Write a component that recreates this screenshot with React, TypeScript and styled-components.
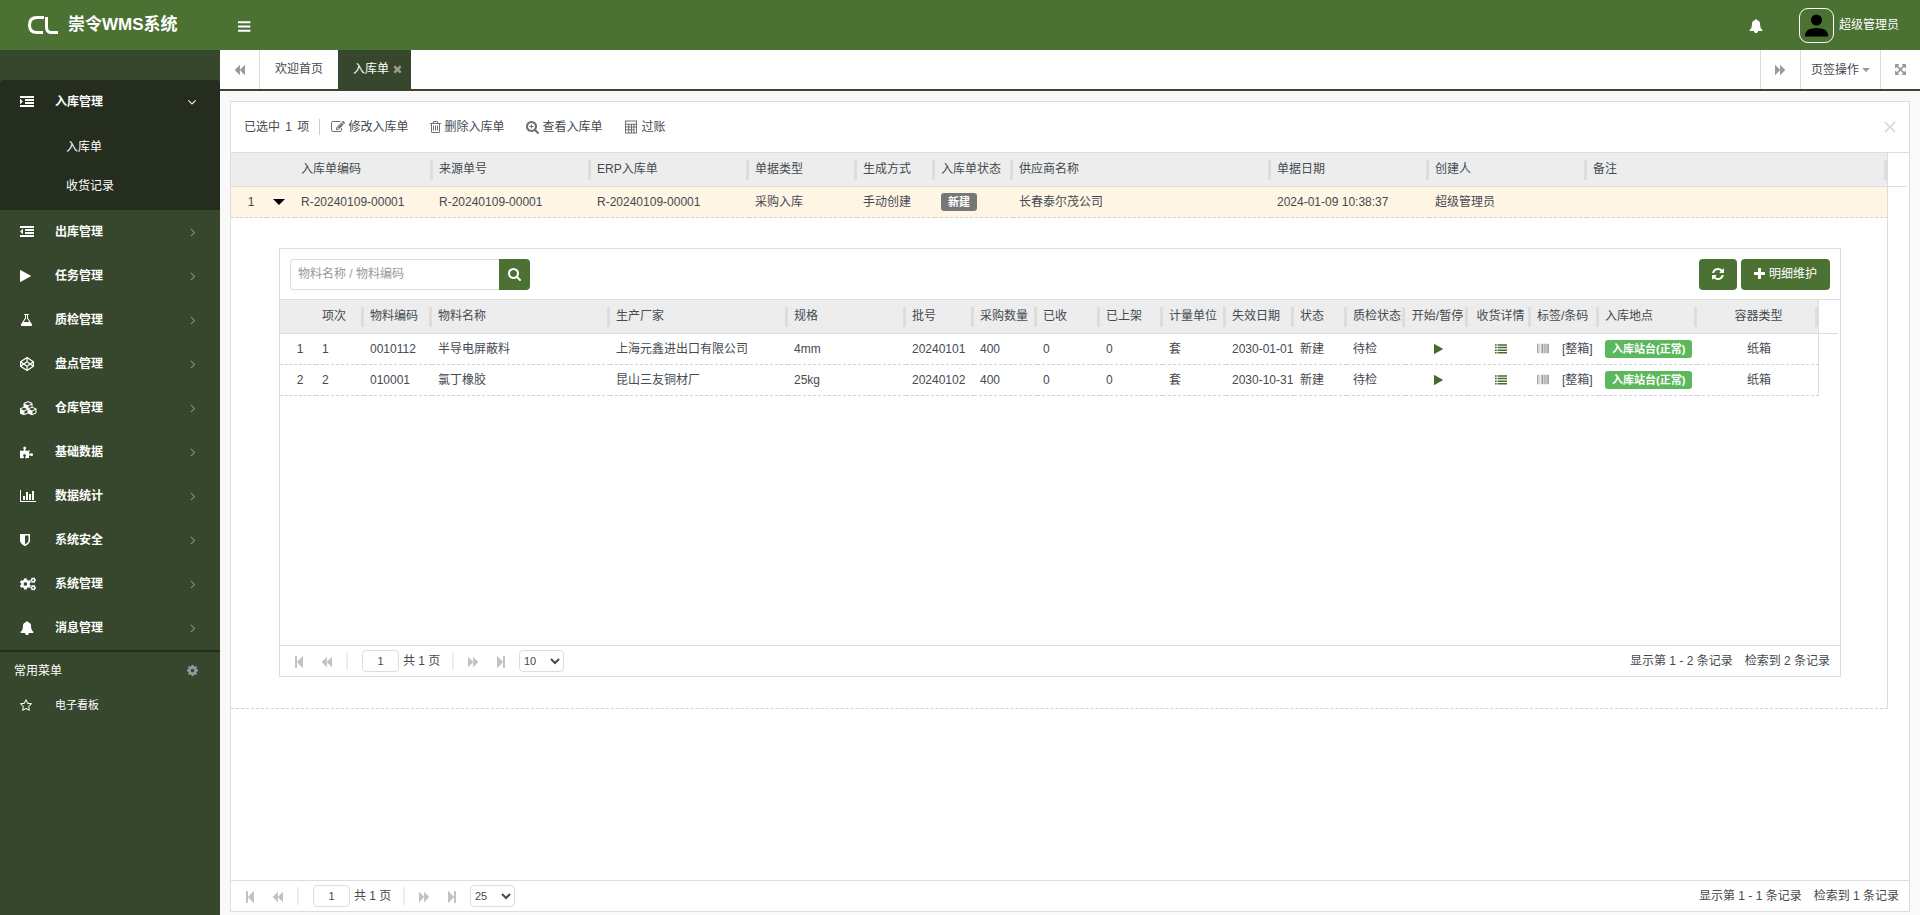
import React from "react";
import styled, { createGlobalStyle } from "styled-components";
import { FaCodepen, FaCogs, FaPuzzlePiece } from "react-icons/fa";

const green = "#4b7133";
const side = "#37472d";
const sideDark = "#242d1e";
const line = "#dddddd";
const text = "#444a50";

const Global = createGlobalStyle`
  * { box-sizing: border-box; }
  body {
    margin: 0;
    background: #f9f9f9;
    color: ${text};
    font: 12px/18px "Liberation Sans", "Noto Sans CJK SC", sans-serif;
  }
  button, input, select { font: inherit; color: inherit; }
  button { border: 0; background: none; padding: 0; cursor: pointer; }
  a { color: inherit; text-decoration: none; }
  ul { list-style: none; margin: 0; padding: 0; }
  svg { display: block; flex: none; }
`;

/* Icon outlines on a 1792-unit em: [left edge, advance width, path] */
const bar = (y: number) =>
  `M0 ${y + 32}q0-32 32-32h1728q32 0 32 32v192q0 32-32 32h-1728q-32 0-32-32z`;
const shortBar = (y: number) =>
  `M640 ${y + 32}q0-32 32-32h1088q32 0 32 32v192q0 32-32 32h-1088q-32 0-32-32z`;
const listLine = (y: number) =>
  `M0 ${y}h256v224h-256zM384 ${y}h1408v224h-1408z`;

const glyphs: Record<string, [number, number, string]> = {
  indent: [0, 1792, "M352 832q0 14-9 23l-288 288q-9 9-23 9-13 0-22.500-9.500t-9.500-22.500v-576q0-13 9.500-22.500t22.500-9.500q14 0 23 9l288 288q9 9 9 23z" + bar(1280) + shortBar(896) + shortBar(512) + bar(128)],
  outdent: [0, 1792, "M384 544v576q0 13-9.500 22.500t-22.500 9.500q-14 0-23-9l-288-288q-9-9-9-23t9-23l288-288q9-9 23-9 13 0 22.500 9.500t9.500 22.500z" + bar(1280) + shortBar(896) + shortBar(512) + bar(128)],
  bars: [192, 1536, "M1664 1344v128q0 26-19 45t-45 19h-1408q-26 0-45-19t-19-45v-128q0-26 19-45t45-19h1408q26 0 45 19t19 45zm0-512v128q0 26-19 45t-45 19h-1408q-26 0-45-19t-19-45v-128q0-26 19-45t45-19h1408q26 0 45 19t19 45zm0-512v128q0 26-19 45t-45 19h-1408q-26 0-45-19t-19-45v-128q0-26 19-45t45-19h1408q26 0 45 19t19 45z"],
  play: [192, 1408, "M1576 927l-1328 738q-23 13-39.500 3t-16.500-36v-1472q0-26 16.500-36t39.500 3l1328 738q23 13 23 31t-23 31z"],
  times: [190, 1408, "M1490 1322q0 40-28 68l-136 136q-28 28-68 28t-68-28l-294-294-294 294q-28 28-68 28t-68-28l-136-136q-28-28-28-68t28-68l294-294-294-294q-28-28-28-68t28-68l136-136q28-28 68-28t68 28l294 294 294-294q28-28 68-28t68 28l136 136q28 28 28 68t-28 68l-294 294 294 294q28 28 28 68z"],
  backward: [64, 1664, "M1683 141q19-19 32-13t13 32v1472q0 26-13 32t-32-13l-710-710q-9-9-13-19v710q0 26-13 32t-32-13l-710-710q-19-19-19-45t19-45l710-710q19-19 32-13t13 32v710q4-10 13-19z"],
  forward: [64, 1664, "M109 1651q-19 19-32 13t-13-32v-1472q0-26 13-32t32 13l710 710q9 9 13 19v-710q0-26 13-32t32 13l710 710q19 19 19 45t-19 45l-710 710q-19 19-32 13t-13-32v-710q-4 10-13 19z"],
  first: [384, 1024, "M1363 141q19-19 32-13t13 32v1472q0 26-13 32t-32-13l-710-710q-9-9-13-19v678q0 64-64 64h-128q-64 0-64-64v-1408q0-64 64-64h128q64 0 64 64v678q4-10 13-19z"],
  last: [384, 1024, "M429 1651q-19 19-32 13t-13-32v-1472q0-26 13-32t32 13l710 710q9 9 13 19v-678q0-64 64-64h128q64 0 64 64v1408q0 64-64 64h-128q-64 0-64-64v-678q-4 10-13 19z"],
  search: [64, 1664, "M1216 832q0-185-131.500-316.500t-316.500-131.500-316.500 131.500-131.500 316.500 131.500 316.500 316.500 131.500 316.500-131.500 131.500-316.500zm512 832q0 52-38 90t-90 38q-54 0-90-38l-343-342q-179 124-399 124-143 0-273.500-55.500t-225-150-150-225-55.500-273.500 55.500-273.500 150-225 225-150 273.500-55.500 273.500 55.500 225 150 150 225 55.500 273.500q0 220-124 399l343 343q37 37 37 90z"],
  refresh: [128, 1536, "M1639 1056q0 5-1 7-64 268-268 434.500t-478 166.500q-146 0-282.500-55t-243.500-157l-129 129q-19 19-45 19t-45-19-19-45v-448q0-26 19-45t45-19h448q26 0 45 19t19 45-19 45l-137 137q71 66 161 102t187 36q134 0 250-65t186-179q11-17 53-117 8-23 30-23h192q13 0 22.500 9.500t9.500 22.500zm25-800v448q0 26-19 45t-45 19h-448q-26 0-45-19t-19-45 19-45l138-138q-148-137-349-137-134 0-250 65t-186 179q-11 17-53 117-8 23-30 23h-199q-13 0-22.500-9.500t-9.500-22.500v-7q65-268 270-434.500t480-166.500q146 0 284 55.500t245 156.500l130-129q19-19 45-19t45 19 19 45z"],
  edit: [0, 1792, "M888 1184l116-116-152-152-116 116v56h96v96h56zm440-720q-16-16-33 1l-350 350q-17 17-1 33t33-1l350-350q17-17 1-33zm80 594v190q0 119-84.500 203.500t-203.500 84.500h-832q-119 0-203.500-84.500t-84.500-203.500v-832q0-119 84.500-203.500t203.500-84.500h832q63 0 117 25 15 7 18 23 3 17-9 29l-49 49q-14 14-32 8-23-6-45-6h-832q-66 0-113 47t-47 113v832q0 66 47 113t113 47h832q66 0 113-47t47-113v-126q0-13 9-22l64-64q15-15 35-7t20 29zm-96-738l288 288-672 672h-288v-288zm444 132l-92 92-288-288 92-92q28-28 68-28t68 28l152 152q28 28 28 68t-28 68z"],
  trash: [192, 1408, "M704 736v576q0 14-9 23t-23 9h-64q-14 0-23-9t-9-23v-576q0-14 9-23t23-9h64q14 0 23 9t9 23zm256 0v576q0 14-9 23t-23 9h-64q-14 0-23-9t-9-23v-576q0-14 9-23t23-9h64q14 0 23 9t9 23zm256 0v576q0 14-9 23t-23 9h-64q-14 0-23-9t-9-23v-576q0-14 9-23t23-9h64q14 0 23 9t9 23zm128 724v-948h-896v948q0 22 7 40.500t14.500 27 10.500 8.500h832q3 0 10.500-8.500t14.500-27 7-40.500zm-672-1076h448l-48-117q-7-9-17-11h-317q-10 2-17 11zm928 32v64q0 14-9 23t-23 9h-96v948q0 83-47 143.500t-113 60.500h-832q-66 0-113-58.500t-47-141.500v-952h-96q-14 0-23-9t-9-23v-64q0-14 9-23t23-9h309l70-167q15-37 54-63t79-26h320q40 0 79 26t54 63l70 167h309q14 0 23 9t9 23z"],
  calc: [0, 1792, "M128 64h1536v1664h-1536zM256 192v288h1280v-288zM256 608v224h288v-224zM672 608v224h224v-224zM1024 608v224h192v-224zM1344 608v224h192v-224zM256 960v224h288v-224zM672 960v224h224v-224zM1024 960v224h192v-224zM256 1312v288h288v-288zM672 1312v288h224v-288zM1024 1312v288h192v-288zM1344 960v640h192v-640z"],
  bell: [0, 1792, "M1728 1408q0 52-38 90t-90 38h-448q0 106-75 181t-181 75-181-75-75-181h-448q-52 0-90-38t-38-90q50-42 91-88t85-119.500 74.500-158.500 50-206 19.500-260q0-152 117-282.500t307-158.500q-8-19-8-39 0-40 28-68t68-28 68 28 28 68q0 20-8 39 190 28 307 158.500t117 282.500q0 139 19.500 260t50 206 74.500 158.500 85 119.500 91 88z"],
  plus: [192, 1408, "M1600 736v192q0 40-28 68t-68 28h-416v416q0 40-28 68t-68 28h-192q-40 0-68-28t-28-68v-416h-416q-40 0-68-28t-28-68v-192q0-40 28-68t68-28h416v-416q0-40 28-68t68-28h192q40 0 68 28t28 68v416h416q40 0 68 28t28 68z"],
  star: [64, 1664, "M1201 1004l306-297-422-62-189-382-189 382-422 62 306 297-73 421 378-199 377 199zm527-357q0 22-26 48l-363 354 86 500q1 7 1 20 0 50-41 50-19 0-40-12l-449-236-449 236q-22 12-40 12-21 0-31.500-14.500t-10.500-35.500q0-6 2-20l86-500-364-354q-25-27-25-48 0-37 56-46l502-73 225-455q19-41 49-41t49 41l225 455 502 73q56 9 56 46z"],
  right: [512, 768, "M1171 960q0 13-10 23l-466 466q-10 10-23 10t-23-10l-50-50q-10-10-10-23t10-23l393-393-393-393q-10-10-10-23t10-23l50-50q10-10 23-10t23 10l466 466q10 10 10 23z"],
  down: [384, 1024, "M1395 736q0 13-10 23l-466 466q-10 10-23 10t-23-10l-466-466q-10-10-10-23t10-23l50-50q10-10 23-10t23 10l393 393 393-393q10-10 23-10t23 10l50 50q10 10 10 23z"],
  list: [0, 1792, listLine(192) + listLine(576) + listLine(960) + listLine(1344)],
  barcode: [0, 1792, "M0 128h128v1408h-128zM192 128h64v1408h-64zM384 128h64v1408h-64zM576 128h64v1408h-64zM704 128h192v1408h-192zM960 128h64v1408h-64zM1088 128h192v1408h-192zM1344 128h64v1408h-64zM1472 128h128v1408h-128zM1664 128h128v1408h-128z"],
  cog: [128, 1536, "M1152 896q0-106-75-181t-181-75-181 75-75 181 75 181 181 75 181-75 75-181zm512-109v222q0 12-8 23t-20 13l-185 28q-19 54-39 91 35 50 107 138 10 12 10 25t-9 23q-27 37-99 108t-94 71q-12 0-26-9l-138-108q-44 23-91 38-16 136-29 186-7 28-36 28h-222q-14 0-24.500-8.500t-11.500-21.500l-28-184q-49-16-90-37l-141 107q-10 9-25 9-14 0-25-11-126-114-165-168-7-10-7-23 0-12 8-23 15-21 51-66.500t54-70.500q-27-50-41-99l-183-27q-13-2-21-12.500t-8-23.500v-222q0-12 8-23t19-13l186-28q14-46 39-92-40-57-107-138-10-12-10-24 0-10 9-23 26-36 98.500-107.500t94.500-71.500q13 0 26 10l138 107q44-23 91-38 16-136 29-186 7-28 36-28h222q14 0 24.500 8.500t11.500 21.500l28 184q49 16 90 37l142-107q9-9 24-9 13 0 25 10 129 119 165 170 7 8 7 22 0 12-8 23-15 21-51 66.500t-54 70.500q26 50 41 98l183 28q13 2 21 12.500t8 23.500z"],
  chart: [0, 2048, "M640 896v512h-256v-512h256zm384-512v1024h-256v-1024h256zm1024 1152v128h-2048v-1536h128v1408h1920zm-640-896v768h-256v-768h256zm384-384v1152h-256v-1152h256z"],
  shield: [256, 1280, "M1344 960v-640h-448v1137q119-63 213-137 235-184 235-360zm192-768v768q0 86-33.500 170.500t-83 150-118 127.500-126.500 103-121 77.500-89.500 49.500-42.500 20q-12 6-26 6t-26-6q-16-7-42.500-20t-89.500-49.500-121-77.500-126.500-103-118-127.500-83-150-33.500-170.500v-768q0-26 19-45t45-19h1152q26 0 45 19t19 45z"],
  flask: [0, 1664, "M1527 1448q56 89 21.500 152.500t-140.500 63.500h-1152q-106 0-140.500-63.500t21.500-152.500l503-793v-399h-64q-26 0-45-19t-19-45 19-45 45-19h512q26 0 45 19t19 45-19 45-45 19h-64v399zm-779-725l-272 429h712l-272-429-20-31v-436h-128v436z"],
  cubes: [0, 2304, "M576 1665l384-192v-314l-384 164v342zm-64-454l404-173-404-173-404 173zm1088 454l384-192v-314l-384 164v342zm-64-454l404-173-404-173-404 173zm-448-293l384-165v-266l-384 164v267zm-64-379l441-189-441-189-441 189zm1088 518v416q0 36-19 67t-52 47l-448 224q-25 14-57 14t-57-14l-448-224q-5-2-7-4-2 2-7 4l-448 224q-25 14-57 14t-57-14l-448-224q-33-16-52-47t-19-67v-416q0-38 21.500-70t56.500-48l434-186v-400q0-38 21.500-70t56.500-48l448-192q23-10 50-10t50 10l448 192q35 16 56.500 48t21.500 70v400l434 186q36 16 57 48t21 70z"],
  expand: [128, 1536, "M1411 541l-355 355 355 355 144-144q29-31 70-14 39 17 39 59v448q0 26-19 45t-45 19h-448q-42 0-59-40-17-39 14-69l144-144-355-355-355 355 144 144q31 30 14 69-17 40-59 40h-448q-26 0-45-19t-19-45v-448q0-42 40-59 39-17 69 14l144 144 355-355-355-355-144 144q-19 19-45 19-12 0-24-5-40-17-40-59v-448q0-26 19-45t45-19h448q42 0 59 40 17 39-14 69l-144 144 355 355 355-355-144-144q-31-30-14-69 17-40 59-40h448q26 0 45 19t19 45v448q0 42-39 59-13 5-25 5-26 0-45-19z"],
};
glyphs.zoomIn = [64, 1664, glyphs.search[2] + "M704 576h128v192h192v128h-192v192h-128v-192h-192v-128h192z"];

function Glyph({ name, size = 14 }: { name: string; size?: number }) {
  const [x, w, d] = glyphs[name];
  return (
    <svg aria-hidden="true" width={Math.round((w / 1792) * size)} height={size} viewBox={`${x} 0 ${w} 1792`} fill="currentColor" fillRule={name === "calc" ? "evenodd" : "nonzero"}>
      <path d={d} />
    </svg>
  );
}

const Shell = styled.div`
  display: flex;
  flex-direction: column;
  min-height: 100vh;
`;
const TopBar = styled.header`
  display: flex;
  align-items: center;
  height: 50px;
  background: ${green};
  color: #fff;
`;
const Brand = styled.a`
  display: flex;
  align-items: center;
  gap: 10px;
  width: 220px;
  height: 50px;
  padding-left: 28px;
  font-size: 17px;
  line-height: 24px;
  font-weight: bold;
`;
const IconButton = styled.button`
  display: flex;
  align-items: center;
  justify-content: center;
  height: 40px;
  padding: 2px 17px 0 18px;
  color: #fff;
`;
const TopRight = styled.div`
  display: flex;
  align-items: center;
  gap: 19px;
  margin-left: auto;
  padding-right: 21px;
`;
const User = styled.a`
  display: flex;
  align-items: center;
  gap: 5px;
`;
const Avatar = styled.span`
  display: flex;
  align-items: center;
  justify-content: center;
  width: 35px;
  height: 35px;
  border: 1px solid #fff;
  border-radius: 9px;
`;
const Body = styled.div`
  display: flex;
  flex: 1;
`;

const Sidebar = styled.nav`
  flex: none;
  width: 220px;
  padding-top: 30px;
  background: ${side};
  color: #fff;
`;
const Group = styled.li<{ $open?: boolean }>`
  background: ${(p) => (p.$open ? sideDark : "none")};
  border-radius: 4px 4px 0 0;
`;
const MenuLink = styled.a`
  display: flex;
  align-items: center;
  height: 44px;
  padding: 0 24px 0 20px;
  font-weight: bold;
`;
const MenuIcon = styled.span`
  display: flex;
  width: 35px;
`;
const Arrow = styled.span<{ $open?: boolean }>`
  display: flex;
  margin-left: auto;
  color: ${(p) => (p.$open ? "#fff" : "#858d80")};
`;
const SubMenu = styled.ul`
  padding: 3px 0 5px;
`;
const SubLink = styled.a`
  display: flex;
  align-items: center;
  height: 39px;
  padding-left: 66px;
`;
const Favourites = styled.section`
  border-top: 2px solid ${sideDark};
`;
const FavTitle = styled.h2`
  display: flex;
  align-items: center;
  justify-content: space-between;
  height: 37px;
  margin: 0;
  padding: 0 22px 0 14px;
  font-size: 12px;
  font-weight: normal;
`;
const FavButton = styled.button`
  padding: 0;
  color: #929ba3;
`;
const FavLink = styled.a`
  display: flex;
  align-items: center;
  height: 32px;
  padding-left: 20px;
  font-size: 11px;
`;

const Main = styled.main`
  display: flex;
  flex-direction: column;
  flex: 1;
  min-width: 0;
`;
const Tabs = styled.div`
  display: flex;
  height: 41px;
  background: #fff;
  border-bottom: 2px solid #3a4530;
`;
const TabTool = styled.button<{ $side: "left" | "right"; $wide?: boolean }>`
  display: flex;
  align-items: center;
  justify-content: center;
  gap: 3px;
  width: ${(p) => (p.$wide ? 80 : 40)}px;
  border-${(p) => (p.$side === "left" ? "right" : "left")}: 1px solid ${line};
  color: #999;
`;
const Label = styled.span`
  color: ${text};
`;
const Caret = styled.span`
  border: 4px solid transparent;
  border-top-color: #999;
  border-bottom: 0;
`;
const Tab = styled.a<{ $active?: boolean }>`
  display: flex;
  align-items: center;
  gap: 4px;
  padding: 0 ${(p) => (p.$active ? 9 : 15)}px 2px 15px;
  background: ${(p) => (p.$active ? side : "#fff")};
  color: ${(p) => (p.$active ? "#fff" : text)};
`;
const TabClose = styled.button`
  color: #9aa094;
`;
const TabRight = styled.div`
  display: flex;
  margin-left: auto;
`;

const Panel = styled.section`
  display: flex;
  flex-direction: column;
  flex: 1;
  margin: 10px 10px 3px;
  border: 1px solid ${line};
  background: #fff;
`;
const Toolbar = styled.div`
  display: flex;
  align-items: center;
  height: 51px;
  border-bottom: 1px solid ${line};
`;
const Selected = styled.span`
  padding: 0 10px 0 13px;
`;
const Count = styled.span`
  margin: 0 2px;
`;
const Divider = styled.span`
  width: 1px;
  height: 16px;
  background: #ccc;
`;
const ToolButton = styled.button`
  display: flex;
  align-items: center;
  gap: 3px;
  height: 30px;
  padding: 0 11px;

  svg { color: #6c6f72; }
`;
const CloseButton = styled.button`
  margin-left: auto;
  padding-right: 13px;
  color: #d4d4d4;
`;

const GridArea = styled.div<{ $tall?: boolean }>`
  flex: 1;
  min-height: ${(p) => (p.$tall ? 345 : 0)}px;
  padding-right: 2px;
`;
const Table = styled.table`
  width: 100%;
  table-layout: fixed;
  border-collapse: separate;
  border-spacing: 0;
`;
const Th = styled.th<{ $last?: boolean }>`
  height: 34px;
  padding: 0;
  font-weight: normal;
  white-space: nowrap;
  background: #ededed;
  border-bottom: 1px solid ${line};
  border-right: ${(p) => (p.$last ? `1px solid ${line}` : 0)};
`;
const ThInner = styled.div<{ $center?: boolean }>`
  height: 20px;
  padding-left: ${(p) => (p.$center ? 5 : 6)}px;
  line-height: 18px;
  text-align: ${(p) => (p.$center ? "center" : "left")};
  border-right: 3px solid ${line};
`;
const Gutter = styled.th`
  padding: 0;
  border-bottom: 1px solid ${line};
`;
const Td = styled.td<{ $center?: boolean; $last?: boolean; $mark?: boolean }>`
  height: 31px;
  padding: ${(p) => (p.$center ? "0 0 0 3px" : p.$mark ? "0 0 0 4px" : "0 0 0 6px")};
  text-align: ${(p) => (p.$center || p.$mark ? "center" : "left")};
  white-space: nowrap;
  border-bottom: 1px dashed #d2d2d2;
  border-right: ${(p) => (p.$last ? `1px solid ${line}` : 0)};
`;
const Row = styled.tr<{ $selected?: boolean }>`
  & > ${Td} {
    background: ${(p) => (p.$selected ? "#fff5e5" : "#fff")};
  }
`;
const DetailCell = styled.td`
  padding: 30px 46px 31px 48px;
  border-bottom: 1px dashed #d2d2d2;
  border-right: 1px solid ${line};
`;
const DetailPanel = styled.div`
  display: flex;
  flex-direction: column;
  border: 1px solid ${line};
`;
const Expander = styled.button`
  display: block;
  border: 6px solid transparent;
  border-top-color: #000;
  border-bottom: 0;
`;
const Badge = styled.span<{ $tone: string }>`
  display: inline-block;
  height: 18px;
  padding: 0 7px;
  border-radius: 3px;
  background: ${(p) => p.$tone};
  color: #fff;
  font-size: 11px;
  font-weight: bold;
  line-height: 18px;
  vertical-align: middle;
`;
const CellButton = styled.button<{ $muted?: boolean }>`
  display: flex;
  align-items: center;
  justify-content: ${(p) => (p.$muted ? "flex-start" : "center")};
  gap: 13px;
  width: 100%;
  color: ${(p) => (p.$muted ? "#999" : "#466a30")};
`;

const SearchBox = styled.form`
  display: flex;
  margin-left: 10px;
`;
const SearchInput = styled.input`
  width: 209px;
  height: 31px;
  padding: 0 7px;
  border: 1px solid ${line};
  border-right: 0;
  border-radius: 4px 0 0 4px;
  outline: 0;
  background: #fff;
  &::placeholder { color: #999; }
`;
const GreenButton = styled.button<{ $joined?: boolean }>`
  display: flex;
  align-items: center;
  justify-content: center;
  gap: 4px;
  height: 31px;
  padding: 0 ${(p) => (p.$joined ? 9 : 13)}px;
  border-radius: ${(p) => (p.$joined ? "0 4px 4px 0" : "4px")};
  background: ${green};
  color: #fff;
`;
const Actions = styled.div`
  display: flex;
  gap: 4px;
  margin-left: auto;
  padding-right: 10px;
`;

const Pager = styled.footer`
  display: flex;
  align-items: center;
  height: 31px;
  padding: 0 10px 0 15px;
  border-top: 1px solid ${line};
`;
const PageButton = styled.button<{ $gap: number }>`
  margin-right: ${(p) => p.$gap}px;
  padding-top: 2px;
  color: #bfc3c7;
`;
const PageRule = styled.span<{ $gap: number }>`
  width: 2px;
  height: 18px;
  margin-right: ${(p) => p.$gap}px;
  background: #eeeeee;
`;
const PageInput = styled.input`
  width: 37px;
  height: 22px;
  margin-right: 4px;
  padding: 0;
  border: 1px solid ${line};
  border-radius: 4px;
  background: #fff;
  font-size: 11px;
  text-align: center;
`;
const PageTotal = styled.label`
  display: flex;
  align-items: center;
  width: 90px;
`;
const PageSize = styled.select`
  width: 45px;
  height: 22px;
  padding: 0;
  border: 1px solid ${line};
  border-radius: 4px;
  background: #fff;
  font-size: 11px;
`;
const PageInfo = styled.span`
  display: flex;
  gap: 12px;
  margin-left: auto;
`;

function PageControls({ size, shown, found }: { size: string; shown: string; found: string }) {
  return (
    <Pager>
      <PageButton type="button" aria-label="首页" $gap={18}><Glyph name="first" size={14} /></PageButton>
      <PageButton type="button" aria-label="上一页" $gap={14}><Glyph name="backward" size={12} /></PageButton>
      <PageRule $gap={14} />
      <PageTotal>
        <PageInput defaultValue="1" />
        共 1 页
      </PageTotal>
      <PageRule $gap={14} />
      <PageButton type="button" aria-label="下一页" $gap={18}><Glyph name="forward" size={12} /></PageButton>
      <PageButton type="button" aria-label="末页" $gap={14}><Glyph name="last" size={14} /></PageButton>
      <PageSize aria-label="每页条数" defaultValue={size}>
        <option>10</option>
        <option>25</option>
        <option>50</option>
      </PageSize>
      <PageInfo>
        <span>{shown}</span>
        <span>{found}</span>
      </PageInfo>
    </Pager>
  );
}

type Column = { title: string; width?: number; center?: boolean };

function GridHead({ columns, marks }: { columns: Column[]; marks: number[] }) {
  return (
    <>
      <colgroup>
        {marks.map((w, i) => <col key={i} width={w} />)}
        {columns.map((c) => <col key={c.title} width={c.width} />)}
        <col width={19} />
      </colgroup>
      <thead>
        <tr>
          {marks.map((_, i) => <Th key={i} />)}
          {columns.map((c, i) => (
            <Th key={c.title} $last={i === columns.length - 1}>
              <ThInner $center={c.center}>{c.title}</ThInner>
            </Th>
          ))}
          <Gutter />
        </tr>
      </thead>
    </>
  );
}

const orderColumns: Column[] = [
  { title: "入库单编码", width: 138 },
  { title: "来源单号", width: 158 },
  { title: "ERP入库单", width: 158 },
  { title: "单据类型", width: 108 },
  { title: "生成方式", width: 78 },
  { title: "入库单状态", width: 78 },
  { title: "供应商名称", width: 258 },
  { title: "单据日期", width: 158 },
  { title: "创建人", width: 158 },
  { title: "备注" },
];

const itemColumns: Column[] = [
  { title: "项次", width: 48 },
  { title: "物料编码", width: 68 },
  { title: "物料名称", width: 178 },
  { title: "生产厂家", width: 178 },
  { title: "规格", width: 118 },
  { title: "批号", width: 68 },
  { title: "采购数量", width: 63 },
  { title: "已收", width: 63 },
  { title: "已上架", width: 63 },
  { title: "计量单位", width: 63 },
  { title: "失效日期", width: 68 },
  { title: "状态", width: 53 },
  { title: "质检状态", width: 58 },
  { title: "开始/暂停", width: 63, center: true },
  { title: "收货详情", width: 63, center: true },
  { title: "标签/条码", width: 68 },
  { title: "入库地点", width: 98 },
  { title: "容器类型", center: true },
];

const items = [
  ["1", "0010112", "半导电屏蔽料", "上海元鑫进出口有限公司", "4mm", "20240101", "400", "0", "0", "套", "2030-01-01", "新建", "待检"],
  ["2", "010001", "氯丁橡胶", "昆山三友铜材厂", "25kg", "20240102", "400", "0", "0", "套", "2030-10-31", "新建", "待检"],
];

const menu: [React.ReactNode, string][] = [
  [<Glyph name="outdent" />, "出库管理"],
  [<Glyph name="play" />, "任务管理"],
  [<Glyph name="flask" />, "质检管理"],
  [<FaCodepen size={14} />, "盘点管理"],
  [<Glyph name="cubes" />, "仓库管理"],
  [<FaPuzzlePiece size={13} />, "基础数据"],
  [<Glyph name="chart" />, "数据统计"],
  [<Glyph name="shield" />, "系统安全"],
  [<FaCogs size={16} />, "系统管理"],
  [<Glyph name="bell" />, "消息管理"],
];

function ItemGrid() {
  return (
    <DetailPanel>
      <Toolbar>
        <SearchBox onSubmit={(e) => e.preventDefault()}>
          <SearchInput aria-label="物料名称 / 物料编码" placeholder="物料名称 / 物料编码" />
          <GreenButton $joined aria-label="搜索"><Glyph name="search" /></GreenButton>
        </SearchBox>
        <Actions>
          <GreenButton type="button" aria-label="刷新"><Glyph name="refresh" /></GreenButton>
          <GreenButton type="button"><Glyph name="plus" />明细维护</GreenButton>
        </Actions>
      </Toolbar>
      <GridArea $tall>
        <Table>
          <GridHead columns={itemColumns} marks={[36]} />
          <tbody>
            {items.map((cells) => (
              <Row key={cells[0]}>
                <Td $mark>{cells[0]}</Td>
                {cells.map((value, i) => <Td key={i}>{value}</Td>)}
                <Td $center><CellButton type="button" aria-label="开始"><Glyph name="play" size={12} /></CellButton></Td>
                <Td $center><CellButton type="button" aria-label="收货详情"><Glyph name="list" size={12} /></CellButton></Td>
                <Td>
                  <CellButton type="button" $muted><Glyph name="barcode" size={12} /><Label>[整箱]</Label></CellButton>
                </Td>
                <Td><Badge $tone="#5cb85c">入库站台(正常)</Badge></Td>
                <Td $center $last>纸箱</Td>
              </Row>
            ))}
          </tbody>
        </Table>
      </GridArea>
      <PageControls size="10" shown="显示第 1 - 2 条记录" found="检索到 2 条记录" />
    </DetailPanel>
  );
}

export default function App() {
  return (
    <Shell>
      <Global />
      <TopBar>
        <Brand href="#">
          <svg width="30" height="18" viewBox="0 0 30 18" fill="none" stroke="#fff" strokeWidth="3" aria-hidden="true">
            <path d="M16 1.500H9Q1.500 1.500 1.500 9T9 16.500H15M18.500 1V11Q18.500 16.500 23 16.500H30" />
          </svg>
          崇令WMS系统
        </Brand>
        <IconButton type="button" aria-label="菜单"><Glyph name="bars" size={15} /></IconButton>
        <TopRight>
          <IconButton type="button" aria-label="消息"><Glyph name="bell" /></IconButton>
          <User href="#">
            <Avatar>
              <svg width="23" height="23" viewBox="0 0 23 23" fill="#000" aria-hidden="true">
                <circle cx="11.500" cy="6" r="5.500" />
                <path d="M0 22.500V20Q1.500 14 11.500 14T23 20V22.500Z" />
              </svg>
            </Avatar>
            超级管理员
          </User>
        </TopRight>
      </TopBar>
      <Body>
        <Sidebar>
          <ul>
            <Group $open>
              <MenuLink href="#">
                <MenuIcon><Glyph name="indent" /></MenuIcon>入库管理
                <Arrow $open><Glyph name="down" /></Arrow>
              </MenuLink>
              <SubMenu>
                <li><SubLink href="#">入库单</SubLink></li>
                <li><SubLink href="#">收货记录</SubLink></li>
              </SubMenu>
            </Group>
            {menu.map(([icon, name]) => (
              <Group key={name}>
                <MenuLink href="#">
                  <MenuIcon>{icon}</MenuIcon>{name}
                  <Arrow><Glyph name="right" /></Arrow>
                </MenuLink>
              </Group>
            ))}
          </ul>
          <Favourites>
            <FavTitle>
              常用菜单
              <FavButton type="button" aria-label="设置"><Glyph name="cog" size={13} /></FavButton>
            </FavTitle>
            <FavLink href="#"><MenuIcon><Glyph name="star" size={13} /></MenuIcon>电子看板</FavLink>
          </Favourites>
        </Sidebar>
        <Main>
          <Tabs>
            <TabTool type="button" $side="left" aria-label="向左"><Glyph name="backward" size={12} /></TabTool>
            <Tab href="#">欢迎首页</Tab>
            <Tab as="div" $active>
              入库单
              <TabClose type="button" aria-label="关闭"><Glyph name="times" size={12} /></TabClose>
            </Tab>
            <TabRight>
              <TabTool type="button" $side="right" aria-label="向右"><Glyph name="forward" size={12} /></TabTool>
              <TabTool type="button" $side="right" $wide><Label>页签操作</Label><Caret /></TabTool>
              <TabTool type="button" $side="right" aria-label="全屏"><Glyph name="expand" size={13} /></TabTool>
            </TabRight>
          </Tabs>
          <Panel>
            <Toolbar>
              <Selected>已选中 <Count>1</Count> 项</Selected>
              <Divider />
              <ToolButton type="button"><Glyph name="edit" />修改入库单</ToolButton>
              <ToolButton type="button"><Glyph name="trash" />删除入库单</ToolButton>
              <ToolButton type="button"><Glyph name="zoomIn" />查看入库单</ToolButton>
              <ToolButton type="button"><Glyph name="calc" />过账</ToolButton>
              <CloseButton type="button" aria-label="关闭">
                <svg width="12" height="12" viewBox="0 0 12 12" stroke="currentColor" strokeWidth="1.500" aria-hidden="true">
                  <path d="M1 1L11 11M11 1L1 11" />
                </svg>
              </CloseButton>
            </Toolbar>
            <GridArea>
              <Table>
                <GridHead columns={orderColumns} marks={[36, 28]} />
                <tbody>
                  <Row $selected>
                    <Td $mark>1</Td>
                    <Td><Expander type="button" aria-label="收起" /></Td>
                    <Td>R-20240109-00001</Td>
                    <Td>R-20240109-00001</Td>
                    <Td>R-20240109-00001</Td>
                    <Td>采购入库</Td>
                    <Td>手动创建</Td>
                    <Td><Badge $tone="#777777">新建</Badge></Td>
                    <Td>长春泰尔茂公司</Td>
                    <Td>2024-01-09 10:38:37</Td>
                    <Td>超级管理员</Td>
                    <Td $last />
                  </Row>
                  <tr>
                    <DetailCell colSpan={12}><ItemGrid /></DetailCell>
                  </tr>
                </tbody>
              </Table>
            </GridArea>
            <PageControls size="25" shown="显示第 1 - 1 条记录" found="检索到 1 条记录" />
          </Panel>
        </Main>
      </Body>
    </Shell>
  );
}
